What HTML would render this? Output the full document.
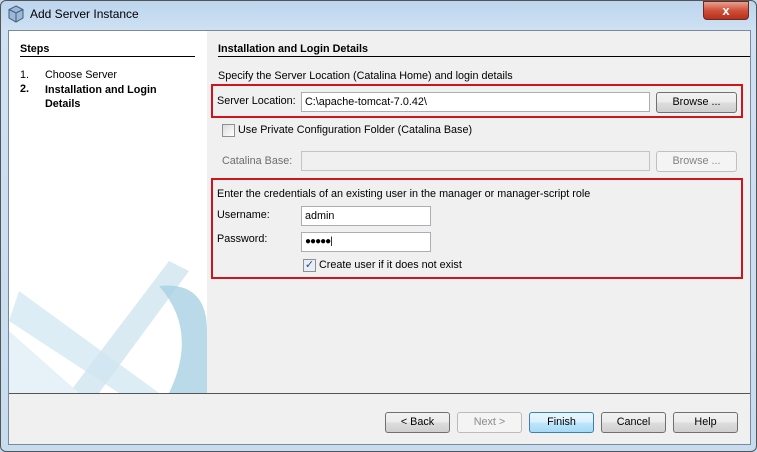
<!DOCTYPE html>
<html><head><meta charset="utf-8"><style>
*{margin:0;padding:0;box-sizing:border-box}
body{width:757px;height:452px;overflow:hidden;font-family:"Liberation Sans","DejaVu Sans",sans-serif;font-size:10.8px;color:#000;background:#c6dbef;position:relative}
.a{position:absolute}
.win{left:0;top:0;width:757px;height:452px;background:linear-gradient(180deg,#bcd5ee 0,#cfe1f3 30px,#c8dcf0 100%);border:1px solid #555;border-radius:6px}
.client{left:8px;top:30px;width:743px;height:415px;background:#f0f0f0;border:1px solid #7a8a9a}
.left{left:9px;top:31px;width:198px;height:362px;background:#fff;overflow:hidden}
.inp{background:#fff;border:1px solid #abadb3;height:20px;padding:0 3px;line-height:18px}
.btn{border:1px solid #707070;border-radius:3px;background:linear-gradient(#f2f2f2,#ebebeb 50%,#dddddd 50%,#cfcfcf);text-align:center;line-height:19px;height:21px}
.red{border:2px solid #d0141c}
.cb{width:13px;height:13px;border:1px solid #8e8f8f;background:linear-gradient(135deg,#dcdcdc,#fff)}
</style></head><body>
<div class="a win"></div>
<svg class="a" style="left:7px;top:5px" width="18" height="18" viewBox="0 0 18 18"><path d="M9 1L16 4.5V13L9 17L2 13V4.5Z" fill="#9db8d6" stroke="#3d5a80"/><path d="M2 4.5L9 8L16 4.5M9 8V17" fill="none" stroke="#3d5a80"/></svg>
<div class="a" style="left:30px;top:7px;font-size:12px">Add Server Instance</div>
<div class="a" style="left:703px;top:1px;width:46px;height:19px;border:1px solid #6b2a20;border-radius:0 0 4px 4px;background:linear-gradient(#e8a090,#d0503a 50%,#b8301c);color:#fff;font-weight:bold;text-align:center;line-height:17px;font-size:13px">x</div>
<div class="a client"></div>
<div class="a left">
<svg width="198" height="362" style="position:absolute;left:0;top:0"><path d="M10 260 L150 362 L110 362 L0 290Z" fill="#d4e8f2" opacity=".8"/><path d="M160 230 L60 362 L90 362 L180 240Z" fill="#cfe5f0" opacity=".8"/><path d="M150 255 Q198 250 198 300 L198 362 L160 362 Q190 300 150 255Z" fill="#a9d1e3" opacity=".8"/><path d="M0 300 L70 362 L0 362Z" fill="#e6f2f7"/></svg>
</div>
<div class="a" style="left:20px;top:43px;font-weight:bold">Steps</div>
<div class="a" style="left:20px;top:56px;width:175px;height:1px;background:#000"></div>
<div class="a" style="left:20px;top:69px">1.</div><div class="a" style="left:45px;top:69px">Choose Server</div>
<div class="a" style="left:20px;top:83px;font-weight:bold">2.</div><div class="a" style="left:45px;top:83px;font-weight:bold;line-height:14px">Installation and Login<br>Details</div>
<div class="a" style="left:218px;top:43px;font-weight:bold">Installation and Login Details</div>
<div class="a" style="left:218px;top:56px;width:532px;height:1px;background:#000"></div>
<div class="a" style="left:218px;top:70px">Specify the Server Location (Catalina Home) and login details</div>
<div class="a red" style="left:211px;top:84px;width:532px;height:34px"></div>
<div class="a" style="left:217px;top:95px">Server Location:</div>
<div class="a inp" style="left:301px;top:92px;width:349px">C:\apache-tomcat-7.0.42\</div>
<div class="a btn" style="left:656px;top:92px;width:81px">Browse ...</div>
<div class="a cb" style="left:222px;top:124px"></div>
<div class="a" style="left:238px;top:124px">Use Private Configuration Folder (Catalina Base)</div>
<div class="a" style="left:222px;top:155px;color:#6d6d6d">Catalina Base:</div>
<div class="a inp" style="left:301px;top:151px;width:349px;background:#f0f0f0;border-color:#c4c4c4"></div>
<div class="a btn" style="left:656px;top:151px;width:81px;border-color:#c0c0c0;background:#f4f4f4;color:#838383">Browse ...</div>
<div class="a red" style="left:211px;top:178px;width:532px;height:101px"></div>
<div class="a" style="left:217px;top:188px">Enter the credentials of an existing user in the manager or manager-script role</div>
<div class="a" style="left:217px;top:209px">Username:</div>
<div class="a inp" style="left:301px;top:206px;width:130px">admin</div>
<div class="a" style="left:217px;top:233px">Password:</div>
<div class="a inp" style="left:301px;top:232px;width:130px;font-size:10px;letter-spacing:-1px">●●●●●|</div>
<div class="a cb" style="left:303px;top:259px;background:#e8eef8;color:#2a4a8a;font-size:11px;line-height:11px;text-align:center">✓</div>
<div class="a" style="left:319px;top:259px">Create user if it does not exist</div>
<div class="a" style="left:9px;top:393px;width:741px;height:1px;background:#555"></div>
<div class="a btn" style="left:385px;top:412px;width:65px">&lt; Back</div>
<div class="a btn" style="left:457px;top:412px;width:65px;border-color:#bbb;background:#f4f4f4;color:#8a8a8a">Next &gt;</div>
<div class="a btn" style="left:529px;top:412px;width:65px;border-color:#3c7fb1;background:linear-gradient(#eaf6fd,#d9f0fc 50%,#bee6fd 50%,#a7d9f5)">Finish</div>
<div class="a btn" style="left:601px;top:412px;width:65px">Cancel</div>
<div class="a btn" style="left:673px;top:412px;width:65px">Help</div>
</body></html>
